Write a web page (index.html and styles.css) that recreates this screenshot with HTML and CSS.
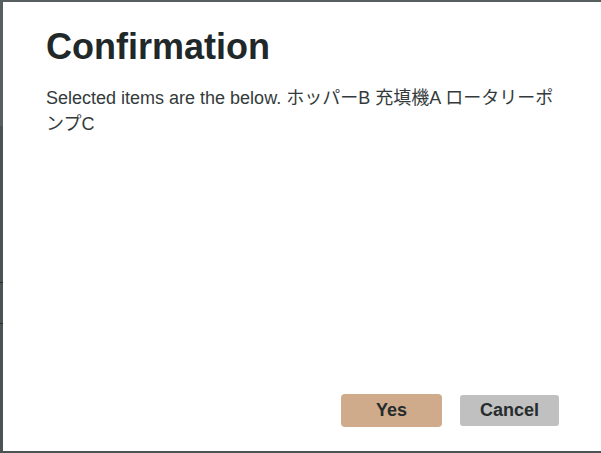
FILE: index.html
```html
<!DOCTYPE html>
<html lang="en">
<head>
<meta charset="utf-8">
<title>Confirmation</title>
<link rel="stylesheet" href="styles.css">
</head>
<body>
<div class="backdrop" aria-hidden="true">
  <div class="bg-band"></div>
  <div class="bg-line line-a"></div>
  <div class="bg-line line-b"></div>
</div>
<div class="modal" role="dialog" aria-labelledby="dlg-title">
  <h1 class="modal-title" id="dlg-title">Confirmation</h1>
  <p class="modal-text">Selected items are the below. ホッパーB 充填機A ロータリーポンプC</p>
  <div class="modal-actions">
    <button class="btn btn-yes" type="button">Yes</button>
    <button class="btn btn-cancel" type="button">Cancel</button>
  </div>
</div>
</body>
</html>
```

FILE: styles.css
```css
html, body {
  margin: 0;
  height: 100%;
}

body {
  background: #4c5354;
  padding: 2px 0 0 3px;
  box-sizing: border-box;
  overflow: hidden;
  font-family: "Liberation Sans", Arial, "Noto Sans CJK JP", sans-serif;
  position: relative;
}

.backdrop {
  position: absolute;
  inset: 0;
  z-index: 0;
}

.bg-band {
  position: absolute;
  left: 0;
  top: 0;
  width: 100%;
  height: 126px;
  background: #575e60;
}

.bg-line {
  position: absolute;
  left: 0;
  width: 100%;
  height: 1px;
  background: #262b2c;
}

.line-a { top: 282px; }
.line-b { top: 323px; }

.modal {
  position: relative;
  z-index: 1;
  width: 600px;
  height: 449px;
  box-sizing: border-box;
  background: #ffffff;
  padding: 24px 44px 24px 43px;
  display: flex;
  flex-direction: column;
}

.modal-title {
  margin: 0;
  font-size: 36px;
  font-weight: bold;
  line-height: 41px;
  color: #212829;
}

.modal-text {
  margin: 18px 0 0 0;
  font-size: 18px;
  line-height: 26px;
  color: #343a3b;
}

.modal-actions {
  margin-top: auto;
  display: flex;
  justify-content: flex-end;
  align-items: center;
  gap: 18px;
}

.btn {
  font-family: "Liberation Sans", Arial, sans-serif;
  font-size: 18px;
  font-weight: bold;
  color: #262c2d;
  border: none;
  border-radius: 4px;
  padding: 0;
  cursor: pointer;
}

.btn-yes {
  width: 101px;
  height: 33px;
  background: #cfab8b;
}

.btn-cancel {
  width: 99px;
  height: 31px;
  background: #c0c0c0;
  border-radius: 3px;
}
```
